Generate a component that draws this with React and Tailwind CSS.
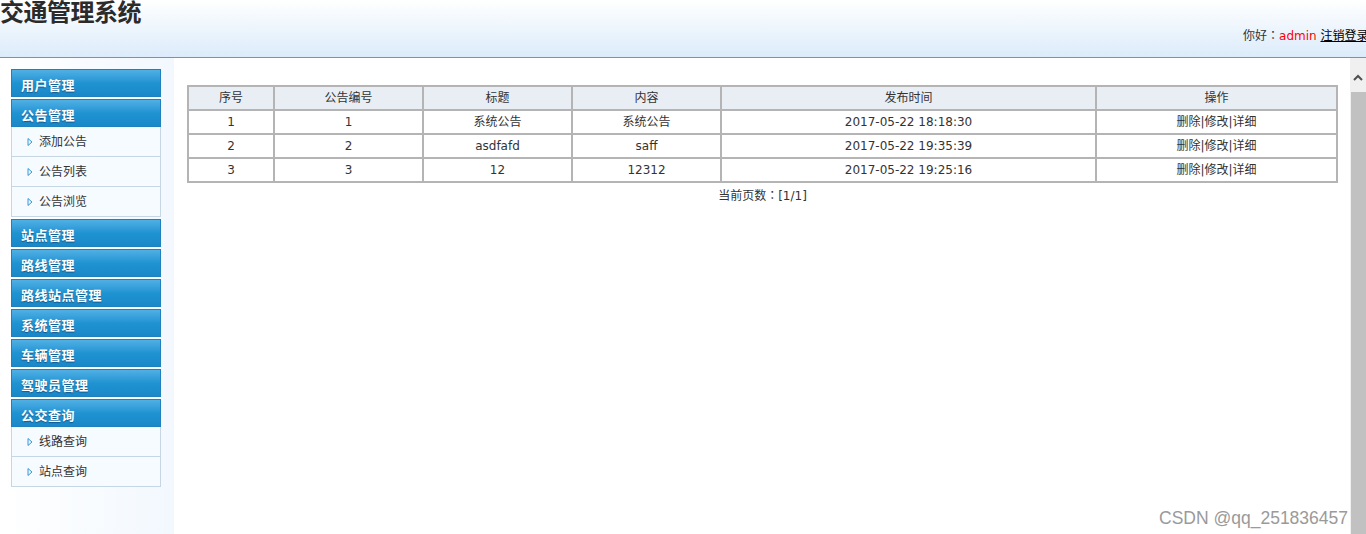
const font = { fontFamily: '"DejaVu Sans", "Noto Sans CJK SC", sans-serif' };
const colon = { fontFamily: '"Noto Sans CJK TC", sans-serif' };

const menu = [
  { title: "用户管理" },
  { title: "公告管理", items: ["添加公告", "公告列表", "公告浏览"] },
  { title: "站点管理" },
  { title: "路线管理" },
  { title: "路线站点管理" },
  { title: "系统管理" },
  { title: "车辆管理" },
  { title: "驾驶员管理" },
  { title: "公交查询", items: ["线路查询", "站点查询"] },
];

const rows = [
  ["1", "1", "系统公告", "系统公告", "2017-05-22 18:18:30"],
  ["2", "2", "asdfafd", "saff", "2017-05-22 19:35:39"],
  ["3", "3", "12", "12312", "2017-05-22 19:25:16"],
];

const cols = ["序号", "公告编号", "标题", "内容", "发布时间", "操作"];
const widths = ["w-[86px]", "w-[149px]", "w-[149px]", "w-[149px]", "w-[375px]", ""];

function Arrow() {
  return (
    <svg width="6" height="10" viewBox="0 0 6 10" className="shrink-0">
      <path d="M1 1.5 L5 5 L1 8.5 Z" fill="#eaf5fc" stroke="#3a9bd5" strokeWidth="1" />
    </svg>
  );
}

function Sidebar() {
  return (
    <aside className="w-[174px] shrink-0 bg-gradient-to-r from-[#ffffff] to-[#f2f8fe] pt-[11px] pl-[11px]">
      <div className="w-[150px]">
        {menu.map((m) => (
          <div key={m.title} className="mb-[2px]">
            <div className="h-[28px] flex items-center pl-[9px] pt-[5px] border border-[#1f7fbf] bg-gradient-to-b from-[#4fb0e4] via-[#1f93d2] to-[#1a88c8] text-white text-[13px] font-bold tracking-[0.5px] [text-shadow:0_1px_1px_rgba(0,40,80,0.5)]">
              {m.title}
            </div>
            {m.items && (
              <div className="border-x border-[#c6d6e2] bg-[#f6fbff]">
                {m.items.map((it) => (
                  <div key={it} className="h-[30px] flex items-center gap-[6px] pl-[15px] border-b border-[#c6d6e2] text-[12px] text-[#333]">
                    <Arrow />
                    <span>{it}</span>
                  </div>
                ))}
              </div>
            )}
          </div>
        ))}
      </div>
    </aside>
  );
}

function Scrollbar() {
  return (
    <div className="w-[16px] shrink-0 flex flex-col bg-[#f0f0f0]">
      <div className="h-[34px] flex items-center justify-center pt-[4px]">
        <svg width="10" height="7" viewBox="0 0 10 7">
          <path d="M1 6 L5 2 L9 6" fill="none" stroke="#505050" strokeWidth="2" />
        </svg>
      </div>
      <div className="flex-1 bg-[#c1c1c1] ml-[1px]" />
    </div>
  );
}

export default function App() {
  return (
    <div className="relative h-[534px] w-[1366px] overflow-hidden flex flex-col bg-white" style={font}>
      <header className="h-[58px] shrink-0 relative bg-gradient-to-b from-[#ffffff] to-[#dcebfa] border-b border-[#5d9ad0]">
        <h1 className="text-[24px] font-bold leading-[26px] text-[#2b2b2b] tracking-[-0.5px]">交通管理系统</h1>
        <div className="absolute left-[1243px] top-[26px] whitespace-nowrap text-[12px] text-[#333]">
          你好<span style={colon}>：</span><span className="text-[#ff0000]">admin</span> <a className="underline text-black">注销登录</a>
        </div>
      </header>
      <div className="flex-1 flex min-h-0">
        <Sidebar />
        <main className="flex-1 pt-[27px] pl-[13px] pr-[12px] text-[12px] text-[#333]">
          <table className="w-[1151px] border-collapse border border-[#a3a3a3]">
            <thead>
              <tr className="h-[24px] bg-[#e9eef5]">
                {cols.map((c, i) => (
                  <th key={c} className={`${widths[i]} border-2 border-[#b4b4b4] font-normal text-center`}>{c}</th>
                ))}
              </tr>
            </thead>
            <tbody>
              {rows.map((r) => (
                <tr key={r[0]} className="h-[24px]">
                  {r.map((v, i) => (
                    <td key={i} className="border-2 border-[#b4b4b4] text-center">{v}</td>
                  ))}
                  <td className="border-2 border-[#b4b4b4] text-center">删除|修改|详细</td>
                </tr>
              ))}
            </tbody>
          </table>
          <div className="w-[1151px] text-center mt-[3px]">
            当前页数<span style={colon}>：</span>[1/1]
          </div>
        </main>
        <Scrollbar />
      </div>
      <div className="absolute z-10 left-[1159px] top-[505px] text-[17.5px] text-[#9a9a9a]" style={{ fontFamily: '"Liberation Sans", sans-serif' }}>
        CSDN @qq_251836457
      </div>
    </div>
  );
}
